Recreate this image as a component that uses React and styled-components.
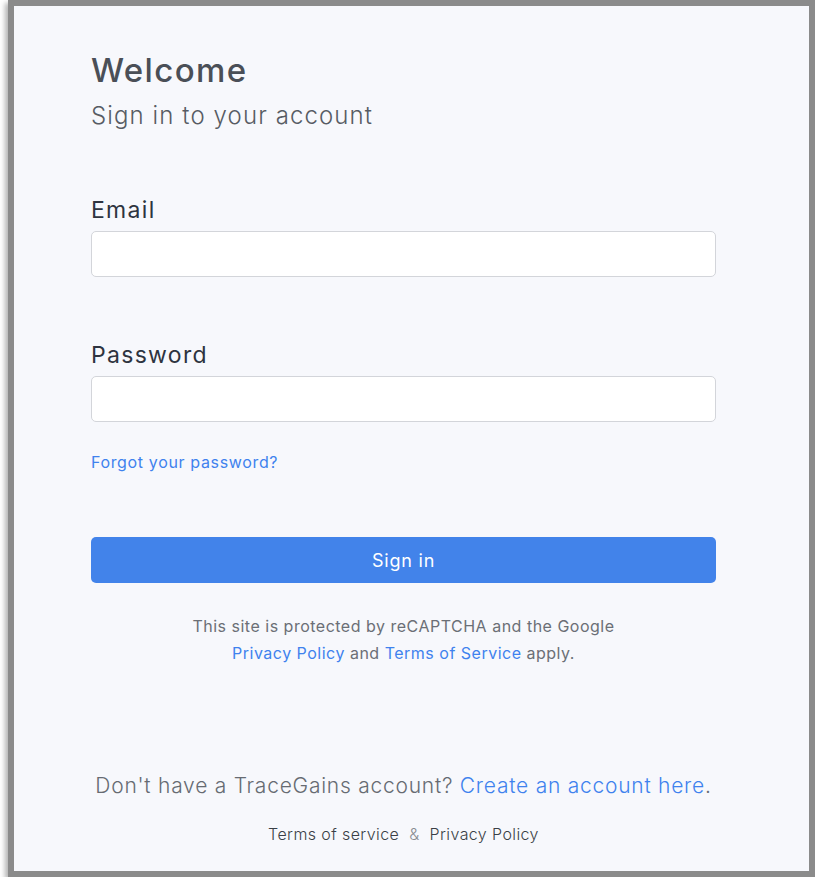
import React from 'react';
import styled, { createGlobalStyle } from 'styled-components';

const GlobalStyle = createGlobalStyle`
  html, body {
    margin: 0;
    padding: 0;
    background: #ffffff;
  }
  body {
    font-family: Inter, "Noto Sans", "Liberation Sans", sans-serif;
  }
`;

const Frame = styled.div`
  box-sizing: border-box;
  margin-left: 8px;
  width: 807px;
  height: 877px;
  border: 6px solid #8b8b8b;
  background: #f7f8fc;
  box-shadow: -3px 3px 5px rgba(0, 0, 0, 0.3);
  display: flex;
  flex-direction: column;
  padding: 44px 93px 25px 77px;
`;

const Title = styled.h1`
  margin: 0;
  font-size: 33px;
  line-height: 40px;
  font-weight: 500;
  letter-spacing: 1.4px;
  color: #4a4f57;
`;

const Subtitle = styled.p`
  margin: 11px 0 0;
  font-size: 24px;
  line-height: 30px;
  font-weight: 300;
  letter-spacing: 1.1px;
  color: #575c64;
`;

const Field = styled.div`
  margin-top: ${(p) => p.$top}px;
  display: flex;
  flex-direction: column;
`;

const Label = styled.label`
  font-size: 23px;
  line-height: 28px;
  font-weight: 400;
  letter-spacing: 1.3px;
  color: #2e3440;
  margin-bottom: 7px;
`;

const Input = styled.input`
  box-sizing: border-box;
  height: 46px;
  width: 100%;
  background: #ffffff;
  border: 1px solid #d3d5da;
  border-radius: 5px;
  padding: 0 12px;
  font-size: 16px;
  font-family: inherit;
`;

const Forgot = styled.a`
  margin-top: 28px;
  font-size: 16px;
  line-height: 24px;
  letter-spacing: 0.65px;
  color: #3f82ee;
  text-decoration: none;
  align-self: flex-start;
`;

const Button = styled.button`
  margin-top: 63px;
  height: 46px;
  width: 100%;
  border: none;
  border-radius: 5px;
  background: #4283ea;
  color: #ffffff;
  font-family: inherit;
  font-size: 18px;
  font-weight: 400;
  letter-spacing: 0.8px;
`;

const Notice = styled.p`
  margin: 30px 0 0;
  text-align: center;
  font-size: 16px;
  line-height: 27px;
  letter-spacing: 0.5px;
  color: #6b6f76;
`;

const Link = styled.a`
  color: #3f82ee;
  text-decoration: none;
`;

const Footer = styled.div`
  margin-top: auto;
  display: flex;
  flex-direction: column;
  align-items: center;
`;

const SignupLine = styled.p`
  margin: 0;
  font-size: 21px;
  line-height: 30px;
  font-weight: 300;
  letter-spacing: 0.75px;
  color: #666b72;
`;

const Legal = styled.div`
  margin-top: 21px;
  font-size: 16px;
  line-height: 24px;
  font-weight: 300;
  letter-spacing: 0.4px;
  color: #3a3f46;
  display: flex;
  gap: 10px;
`;

const Amp = styled.span`
  color: #8a8d92;
`;

const App = () => {
  return (
    <>
      <GlobalStyle />
      <Frame>
        <Title>Welcome</Title>
        <Subtitle>Sign in to your account</Subtitle>
        <Field $top={65}>
          <Label htmlFor='email'>Email</Label>
          <Input id='email' type='email' />
        </Field>
        <Field $top={64}>
          <Label htmlFor='password'>Password</Label>
          <Input id='password' type='password' />
        </Field>
        <Forgot href='#'>Forgot your password?</Forgot>
        <Button>Sign in</Button>
        <Notice>
          This site is protected by reCAPTCHA and the Google
          <br />
          <Link href='#'>Privacy Policy</Link> and <Link href='#'>Terms of Service</Link> apply.
        </Notice>
        <Footer>
          <SignupLine>
            Don't have a TraceGains account? <Link href='#'>Create an account here</Link>.
          </SignupLine>
          <Legal>
            <span>Terms of service</span>
            <Amp>&amp;</Amp>
            <span>Privacy Policy</span>
          </Legal>
        </Footer>
      </Frame>
    </>
  );
};

export default App;
